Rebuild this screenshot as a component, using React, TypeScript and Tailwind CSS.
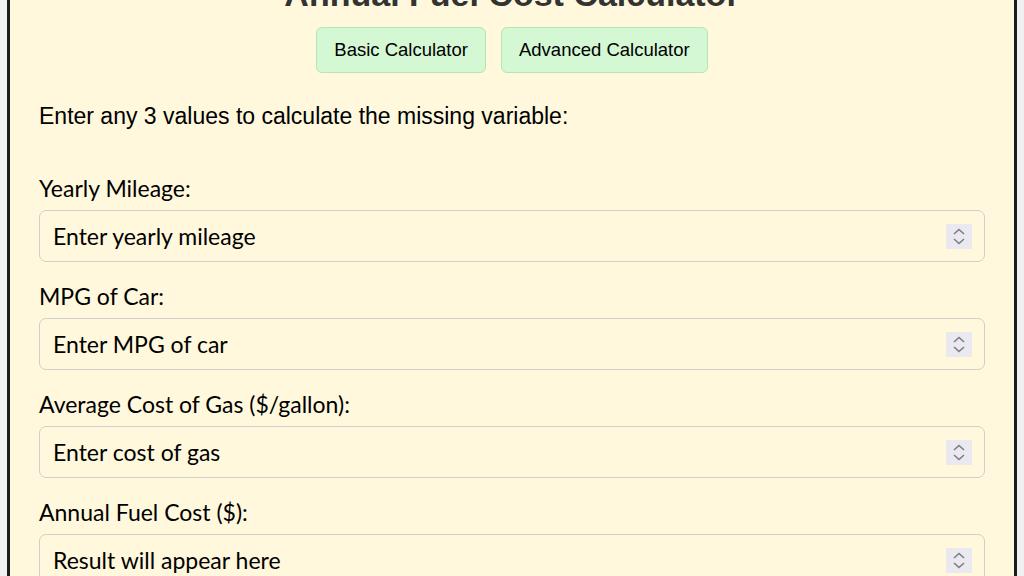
import { useState } from "react";

function Spinner() {
    return (
        <div className="flex flex-col items-center justify-center w-[26px] h-[25px] bg-[#e9e9ef] gap-[3px]">
            <svg width="12" height="7" viewBox="0 0 12 7" fill="none" stroke="#7d7d85" strokeWidth="1.6">
                <path d="M1 6 L6 1.5 L11 6" />
            </svg>
            <svg width="12" height="7" viewBox="0 0 12 7" fill="none" stroke="#7d7d85" strokeWidth="1.6">
                <path d="M1 1 L6 5.5 L11 1" />
            </svg>
        </div>
    );
}

function Field({ label, placeholder }: { label: string; placeholder: string }) {
    return (
        <div className="flex flex-col">
            <label className="text-[23px] leading-7 text-black font-['Lato',sans-serif]">{label}</label>
            <div className="mt-[8px] h-[52px] flex items-center justify-between pl-[13px] pr-[12px] border border-[#cfcfcf] rounded-[7px]">
                <span className="text-[23px] text-black font-['Lato',sans-serif]">{placeholder}</span>
                <Spinner />
            </div>
        </div>
    );
}

export default function App() {
    const [mode, setMode] = useState("basic");

    return (
        <div className="w-screen h-[576px] overflow-hidden bg-[#f0f0f0] px-[7px]">
            <div className="flex flex-col bg-[#fff8dc] border-x-[3px] border-[#1c1c1c] h-full px-[29px] font-['Liberation_Sans',Arial,sans-serif]">
                <h1 className="-mt-[26px] h-10 leading-10 text-center text-[34px] font-bold text-[#333]">
                    Annual Fuel Cost Calculator
                </h1>
                <div className="flex justify-center gap-[15px] mt-[13px]">
                    <button
                        onClick={() => setMode("basic")}
                        className="h-[46px] px-[17px] bg-[#d4f7d4] border border-[#b5e6b5] rounded-[6px] text-[18.5px] text-black"
                    >
                        Basic Calculator
                    </button>
                    <button
                        onClick={() => setMode("advanced")}
                        className="h-[46px] px-[17px] bg-[#d4f7d4] border border-[#b5e6b5] rounded-[6px] text-[18.5px] text-black"
                    >
                        Advanced Calculator
                    </button>
                </div>
                <p className="mt-[29px] text-[23px] leading-7 text-black">
                    Enter any 3 values to calculate the missing variable:
                </p>
                <div className="mt-[44px] flex flex-col gap-[20px]" data-mode={mode}>
                    <Field label="Yearly Mileage:" placeholder="Enter yearly mileage" />
                    <Field label="MPG of Car:" placeholder="Enter MPG of car" />
                    <Field label="Average Cost of Gas ($/gallon):" placeholder="Enter cost of gas" />
                    <Field label="Annual Fuel Cost ($):" placeholder="Result will appear here" />
                </div>
            </div>
        </div>
    );
}
